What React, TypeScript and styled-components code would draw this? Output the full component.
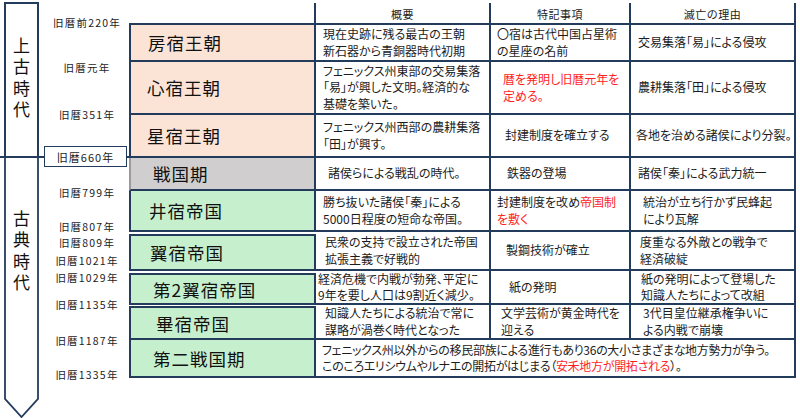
import React from "react";
import styled, { createGlobalStyle } from "styled-components";

const NAVY = "#243c5c";
const PEACH = "#fbe4d6";
const GRAY = "#d0cece";
const GREEN = "#c6efce";

const Global = createGlobalStyle`
  html, body { margin: 0; padding: 0; background: #fff; }
  body {
    font-family: "Noto Sans CJK JP", "Noto Sans", sans-serif;
    color: #1c1c1c;
  }
`;

const Page = styled.div`
  width: 800px;
  height: 418px;
  display: flex;
  padding-top: 2px;
  box-sizing: border-box;
  overflow: hidden;
`;

const Left = styled.div`
  width: 129px;
  flex: none;
  display: flex;
  flex-direction: column;
`;

const UpperBand = styled.div`
  height: 156px;
  flex: none;
  display: flex;
  box-sizing: border-box;
  border-bottom: 2px solid ${NAVY};
`;

const LowerBand = styled.div`
  flex: 1;
  display: flex;
`;

const EraBox = styled.div`
  margin-left: 4px;
  width: 35px;
  flex: none;
  box-sizing: border-box;
  border: 2px solid ${NAVY};
  border-bottom: none;
  display: flex;
  justify-content: center;
  align-items: center;
`;

const ArrowBox = styled.div`
  margin-left: 4px;
  width: 35px;
  flex: none;
  position: relative;
  display: flex;
  justify-content: center;
  align-items: flex-start;
  padding-top: 52px;
  box-sizing: border-box;
`;

const ArrowShape = styled.svg`
  position: absolute;
  inset: 0;
  width: 100%;
  height: 100%;
`;

const EraText = styled.div`
  position: relative;
  writing-mode: vertical-rl;
  font-size: 17px;
  letter-spacing: 4.5px;
  line-height: 1;
  color: #111;
`;

const YearCol = styled.div`
  flex: 1;
  display: flex;
  flex-direction: column;
  align-items: center;
  padding-left: 6px;
`;

const Year = styled.div<{ $mt: number }>`
  margin-top: ${(p) => p.$mt}px;
  font-size: 10.5px;
  letter-spacing: 1.2px;
  line-height: 12px;
  height: 12px;
  white-space: nowrap;
`;

const Divider = styled.div`
  position: relative;
  height: 0;
`;

const Badge = styled.div`
  position: absolute;
  left: 44px;
  top: -12px;
  width: 83px;
  height: 21px;
  box-sizing: border-box;
  border: 1.5px solid ${NAVY};
  background: #fff;
  display: flex;
  align-items: center;
  justify-content: center;
  font-size: 11px;
  letter-spacing: 1px;
`;

const Table = styled.div`
  margin-top: 1px;
  display: grid;
  grid-template-columns: 187px 175px 140px 165px;
  grid-template-rows: 22px 37px 53px 43px 33px 41px 39px 34px 35px 38px;
  align-self: flex-start;
`;

const HeadBlank = styled.div`
  border-right: 2px solid ${NAVY};
  border-bottom: 2px solid ${NAVY};
`;

const HeadCell = styled.div`
  border-right: 2px solid ${NAVY};
  border-bottom: 2px solid ${NAVY};
  display: flex;
  align-items: center;
  justify-content: center;
  padding-top: 1px;
  font-size: 11px;
  letter-spacing: 0.5px;
`;

const NameCell = styled.div<{ $bg: string; $indent: number; $gap: number; $soft?: boolean }>`
  background: ${(p) => p.$bg};
  margin-top: ${(p) => p.$gap}px;
  border-left: 2px solid ${(p) => (p.$soft ? "#9a9a9a" : NAVY)};
  border-right: 2px solid ${NAVY};
  border-bottom: 2px solid ${NAVY};
  border-top: ${(p) => (p.$gap ? `2px solid ${NAVY}` : "none")};
  display: flex;
  align-items: center;
  padding-left: ${(p) => p.$indent}px;
  font-size: 17.5px;
  letter-spacing: 1px;
  color: #111;
  white-space: nowrap;
`;

const TextCell = styled.div<{ $indent: number; $span?: boolean }>`
  grid-column: ${(p) => (p.$span ? "2 / 5" : "auto")};
  border-right: 2px solid ${NAVY};
  border-bottom: 2px solid ${NAVY};
  display: flex;
  flex-direction: column;
  justify-content: center;
  padding-left: ${(p) => p.$indent}px;
  font-size: 12px;
  line-height: 16.5px;
  letter-spacing: ${(p) => (p.$span ? "-0.3px" : "0")};
  font-feature-settings: "palt";
  white-space: nowrap;
  overflow: hidden;
`;

const Red = styled.span`
  color: #ff1e1e;
`;

type Cell = { lines: React.ReactNode[]; indent: number };
type Row = {
  name: string;
  bg: string;
  indent: number;
  gap?: number;
  soft?: boolean;
  cells?: Cell[];
  merged?: Cell;
};

const rows: Row[] = [
  {
    name: "房宿王朝",
    bg: PEACH,
    indent: 17,
    cells: [
      { lines: ["現在史跡に残る最古の王朝", "新石器から青銅器時代初期"], indent: 7 },
      { lines: ["〇宿は古代中国占星術", "の星座の名前"], indent: 6 },
      { lines: ["交易集落「易」による侵攻"], indent: 7 },
    ],
  },
  {
    name: "心宿王朝",
    bg: PEACH,
    indent: 16,
    cells: [
      {
        lines: ["フェニックス州東部の交易集落", "「易」が興した文明。経済的な", "基礎を築いた。"],
        indent: 7,
      },
      { lines: [<Red key="a">暦を発明し旧暦元年を</Red>, <Red key="b">定める。</Red>], indent: 12 },
      { lines: ["農耕集落「田」による侵攻"], indent: 7 },
    ],
  },
  {
    name: "星宿王朝",
    bg: PEACH,
    indent: 16,
    cells: [
      { lines: ["フェニックス州西部の農耕集落", "「田」が興す。"], indent: 7 },
      { lines: ["封建制度を確立する"], indent: 14 },
      { lines: ["各地を治める諸侯により分裂。"], indent: 5 },
    ],
  },
  {
    name: "戦国期",
    bg: GRAY,
    indent: 22,
    soft: true,
    cells: [
      { lines: ["諸侯らによる戦乱の時代。"], indent: 12 },
      { lines: ["鉄器の登場"], indent: 16 },
      { lines: ["諸侯「秦」による武力統一"], indent: 7 },
    ],
  },
  {
    name: "井宿帝国",
    bg: GREEN,
    indent: 18,
    cells: [
      { lines: ["勝ち抜いた諸侯「秦」による", "5000日程度の短命な帝国。"], indent: 7 },
      {
        lines: [
          <span key="a">
            封建制度を改め<Red>帝国制</Red>
          </span>,
          <Red key="b">を敷く</Red>,
        ],
        indent: 6,
      },
      { lines: ["統治が立ち行かず民蜂起", "により瓦解"], indent: 12 },
    ],
  },
  {
    name: "翼宿帝国",
    bg: GREEN,
    indent: 19,
    gap: 2,
    cells: [
      { lines: ["民衆の支持で設立された帝国", "拡張主義で好戦的"], indent: 9 },
      { lines: ["製鋼技術が確立"], indent: 15 },
      { lines: ["度重なる外敵との戦争で", "経済破綻"], indent: 9 },
    ],
  },
  {
    name: "第2翼宿帝国",
    bg: GREEN,
    indent: 22,
    gap: 2,
    cells: [
      { lines: ["経済危機で内戦が勃発、平定に", "9年を要し人口は9割近く減少。"], indent: 2 },
      { lines: ["紙の発明"], indent: 18 },
      { lines: ["紙の発明によって登場した", "知識人たちによって改組"], indent: 10 },
    ],
  },
  {
    name: "畢宿帝国",
    bg: GREEN,
    indent: 25,
    gap: 1,
    cells: [
      { lines: ["知識人たちによる統治で常に", "謀略が渦巻く時代となった"], indent: 9 },
      { lines: ["文学芸術が黄金時代を", "迎える"], indent: 10 },
      { lines: ["3代目皇位継承権争いに", "よる内戦で崩壊"], indent: 12 },
    ],
  },
  {
    name: "第二戦国期",
    bg: GREEN,
    indent: 22,
    merged: {
      lines: [
        "フェニックス州以外からの移民部族による進行もあり36の大小さまざまな地方勢力が争う。",
        <span key="b">
          このころエリシウムやルナエの開拓がはじまる（<Red>安禾地方が開拓される</Red>）。
        </span>,
      ],
      indent: 6,
    },
  },
];

const upperYears: [string, number][] = [
  ["旧暦前220年", 15],
  ["旧暦元年", 33],
  ["旧暦351年", 35],
];

const lowerYears: [string, number][] = [
  ["旧暦799年", 29],
  ["旧暦807年", 22],
  ["旧暦809年", 4],
  ["旧暦1021年", 6],
  ["旧暦1029年", 5],
  ["旧暦1135年", 15],
  ["旧暦1187年", 24],
  ["旧暦1335年", 22],
];

const renderCell = (c: Cell, key: string, span?: boolean) => (
  <TextCell key={key} $indent={c.indent} $span={span}>
    {c.lines.map((l, i) => (
      <div key={i}>{l}</div>
    ))}
  </TextCell>
);

export default function App() {
  return (
    <>
      <Global />
      <Page>
        <Left>
          <UpperBand>
            <EraBox>
              <EraText>上古時代</EraText>
            </EraBox>
            <YearCol>
              {upperYears.map(([t, mt]) => (
                <Year key={t} $mt={mt}>
                  {t}
                </Year>
              ))}
            </YearCol>
          </UpperBand>
          <Divider>
            <Badge>旧暦660年</Badge>
          </Divider>
          <LowerBand>
            <ArrowBox>
              <ArrowShape viewBox="0 0 35 259" preserveAspectRatio="none">
                <polygon
                  points="1,-2 34,-2 34,240 17.5,258 1,240"
                  fill="#fff"
                  stroke={NAVY}
                  strokeWidth="1.8"
                />
              </ArrowShape>
              <EraText>古典時代</EraText>
            </ArrowBox>
            <YearCol>
              {lowerYears.map(([t, mt]) => (
                <Year key={t} $mt={mt}>
                  {t}
                </Year>
              ))}
            </YearCol>
          </LowerBand>
        </Left>
        <Table>
          <HeadBlank />
          <HeadCell>概要</HeadCell>
          <HeadCell>特記事項</HeadCell>
          <HeadCell>滅亡の理由</HeadCell>
          {rows.map((r) => (
            <React.Fragment key={r.name}>
              <NameCell $bg={r.bg} $indent={r.indent} $gap={r.gap ?? 0} $soft={r.soft}>
                {r.name}
              </NameCell>
              {r.merged
                ? renderCell(r.merged, r.name + "m", true)
                : r.cells!.map((c, i) => renderCell(c, r.name + i))}
            </React.Fragment>
          ))}
        </Table>
      </Page>
    </>
  );
}
